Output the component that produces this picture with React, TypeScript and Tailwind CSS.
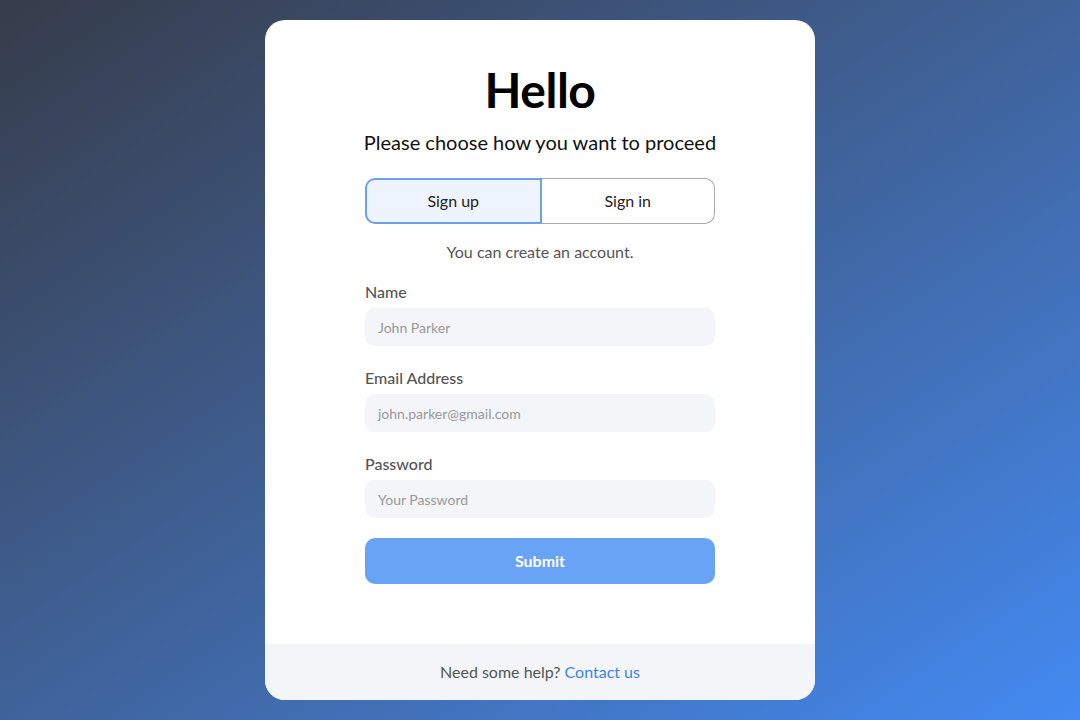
import React from "react";

export default function App() {
  const font = { fontFamily: "Lato, 'Noto Sans', sans-serif" };
  return (
    <div
      className="w-[1080px] h-[720px] bg-linear-to-br from-[#363c4a] to-[#438af2] flex items-center justify-center"
      style={font}
    >
      <div className="w-[550px] h-[680px] bg-white rounded-[20px] overflow-hidden flex flex-col">
        <div className="flex-1 px-[100px] pt-[40px] flex flex-col items-center">
          <h1 className="text-[48px] leading-[60px] font-bold text-black tracking-[-0.5px]">Hello</h1>
          <p className="mt-[9px] text-[20px] leading-[26px] text-[#111] whitespace-nowrap">Please choose how you want to proceed</p>
          <div className="mt-[23px] w-full flex h-[46px]">
            <button className="flex-1 rounded-l-[10px] border-2 border-[#6ba0f0] bg-[#eef4fd] text-[16px] text-[#222]">
              Sign up
            </button>
            <button className="flex-1 rounded-r-[10px] border border-l-0 border-[#aaa] bg-white text-[16px] text-[#222]">
              Sign in
            </button>
          </div>
          <p className="mt-[17px] text-[16px] leading-[22px] text-[#555]">You can create an account.</p>
          <div className="mt-[19px] w-full flex flex-col">
            <label className="text-[16px] leading-[20px] text-[#555] font-medium">Name</label>
            <div className="mt-[6px] h-[38px] rounded-[10px] bg-[#f3f5f8] px-[13px] flex items-center text-[14px] text-[#999]">
              John Parker
            </div>
            <label className="mt-[20px] text-[16px] leading-[24px] text-[#555] font-medium">Email Address</label>
            <div className="mt-[4px] h-[38px] rounded-[10px] bg-[#f3f5f8] px-[13px] flex items-center text-[14px] text-[#999]">
              john.parker@gmail.com
            </div>
            <label className="mt-[20px] text-[16px] leading-[24px] text-[#555] font-medium">Password</label>
            <div className="mt-[4px] h-[38px] rounded-[10px] bg-[#f3f5f8] px-[13px] flex items-center text-[14px] text-[#999]">
              Your Password
            </div>
            <button className="mt-[20px] h-[46px] rounded-[10px] bg-[#68a3f5] text-white font-bold text-[16px]">
              Submit
            </button>
          </div>
        </div>
        <div className="h-[56px] bg-[#f3f5f8] flex items-center justify-center text-[16px] text-[#555]">
          Need some help?&nbsp;<span className="text-[#3b82f6]">Contact us</span>
        </div>
      </div>
    </div>
  );
}
